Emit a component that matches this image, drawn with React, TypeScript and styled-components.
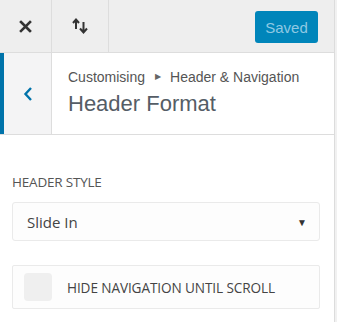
import React from "react";
import styled, { createGlobalStyle } from "styled-components";

const Global = createGlobalStyle`
  html, body { margin: 0; padding: 0; background: #f1f1f1; }
  #root { width: 337px; height: 322px; overflow: hidden; }
`;

const Frame = styled.div`
  width: 337px;
  height: 322px;
  display: flex;
  background: #f1f1f1;
`;

const Panel = styled.div`
  width: 334px;
  height: 322px;
  border-right: 1px solid #dcdcdc;
  background: #fff;
  display: flex;
  flex-direction: column;
`;

const TopBar = styled.div`
  height: 52px;
  background: #eee;
  border-bottom: 1px solid #ddd;
  display: flex;
  align-items: stretch;
`;

const IconButton = styled.div<{ $w: number }>`
  width: ${(p) => p.$w}px;
  border-right: 1px solid #ddd;
  display: flex;
  align-items: center;
  justify-content: center;
  color: #555;
`;

const Spacer = styled.div`
  flex: 1;
`;

const SaveButton = styled.div`
  margin: 11px 16px 0 0;
  width: 63px;
  height: 32px;
  border-radius: 3px;
  background: #0085ba;
  color: #8fc9e3;
  font-family: "Liberation Sans", Arial, sans-serif;
  font-size: 15px;
  display: flex;
  align-items: center;
  justify-content: center;
`;

const SectionHead = styled.div`
  height: 81px;
  border-bottom: 1px solid #ddd;
  display: flex;
`;

const BackButton = styled.div`
  width: 47px;
  border-left: 4px solid #0073aa;
  border-right: 1px solid #ddd;
  background: #f4f4f5;
  display: flex;
  align-items: center;
  justify-content: center;
  color: #0073aa;
`;

const Titles = styled.div`
  padding: 14px 0 0 16px;
  font-family: "Liberation Sans", Arial, sans-serif;
  color: #555d66;
`;

const Crumb = styled.div`
  font-size: 14px;
  line-height: 20px;
  color: #555;
  display: flex;
  align-items: center;
`;

const Arrow = styled.span`
  font-size: 8px;
  margin: 0 9px 0 10px;
  color: #666;
`;

const Title = styled.div`
  font-size: 22px;
  line-height: 30px;
  margin-top: 2px;
  color: #555d66;
`;

const Body = styled.div`
  padding: 38px 14px 0 12px;
  font-family: "Open Sans", "Noto Sans", sans-serif;
  color: #555;
`;

const Label = styled.div`
  font-size: 13.5px;
  line-height: 18px;
  color: #555;
  margin-bottom: 11px;
  letter-spacing: -0.2px;
`;

const Select = styled.div`
  height: 37px;
  border: 1px solid #eaeaea;
  border-radius: 3px;
  background: #fdfdfd;
  display: flex;
  align-items: center;
  padding: 0 12px 0 14px;
  font-size: 15px;
  color: #444;
`;

const SelectText = styled.span`
  flex: 1;
`;

const Caret = styled.span`
  font-size: 10px;
  color: #333;
`;

const CheckRow = styled.div`
  margin-top: 24px;
  height: 42px;
  border: 1px solid #eaeaea;
  border-radius: 2px;
  background: #fdfdfd;
  display: flex;
  align-items: center;
  padding-left: 11px;
`;

const Box = styled.div`
  width: 28px;
  height: 28px;
  border-radius: 4px;
  background: #efefef;
  margin-right: 15px;
`;

const CheckText = styled.span`
  font-size: 13.6px;
  color: #444;
  letter-spacing: -0.1px;
`;

export default function App() {
  return (
    <>
      <Global />
      <Frame>
        <Panel>
          <TopBar>
            <IconButton $w={51}>
              <svg width="13" height="13" viewBox="0 0 13 13">
                <path d="M2 2 L11 11 M11 2 L2 11" stroke="#333" strokeWidth="2.6" strokeLinecap="square" />
              </svg>
            </IconButton>
            <IconButton $w={56}>
              <svg width="20" height="18" viewBox="0 0 20 18">
                <path d="M6 12 V3 M3 6 L6 2.5 L9 6" stroke="#333" strokeWidth="2" fill="none" />
                <path d="M13.5 5 V15 M10 11.5 L13.5 15.5 L17 11.5" stroke="#333" strokeWidth="2" fill="none" />
              </svg>
            </IconButton>
            <Spacer />
            <SaveButton>Saved</SaveButton>
          </TopBar>
          <SectionHead>
            <BackButton>
              <svg width="10" height="16" viewBox="0 0 10 16">
                <path d="M8 2 L2.5 8 L8 14" stroke="#0073aa" strokeWidth="2.4" fill="none" />
              </svg>
            </BackButton>
            <Titles>
              <Crumb>
                Customising<Arrow>▶</Arrow>Header &amp; Navigation
              </Crumb>
              <Title>Header Format</Title>
            </Titles>
          </SectionHead>
          <Body>
            <Label>HEADER STYLE</Label>
            <Select>
              <SelectText>Slide In</SelectText>
              <Caret>▼</Caret>
            </Select>
            <CheckRow>
              <Box />
              <CheckText>HIDE NAVIGATION UNTIL SCROLL</CheckText>
            </CheckRow>
          </Body>
        </Panel>
      </Frame>
    </>
  );
}
